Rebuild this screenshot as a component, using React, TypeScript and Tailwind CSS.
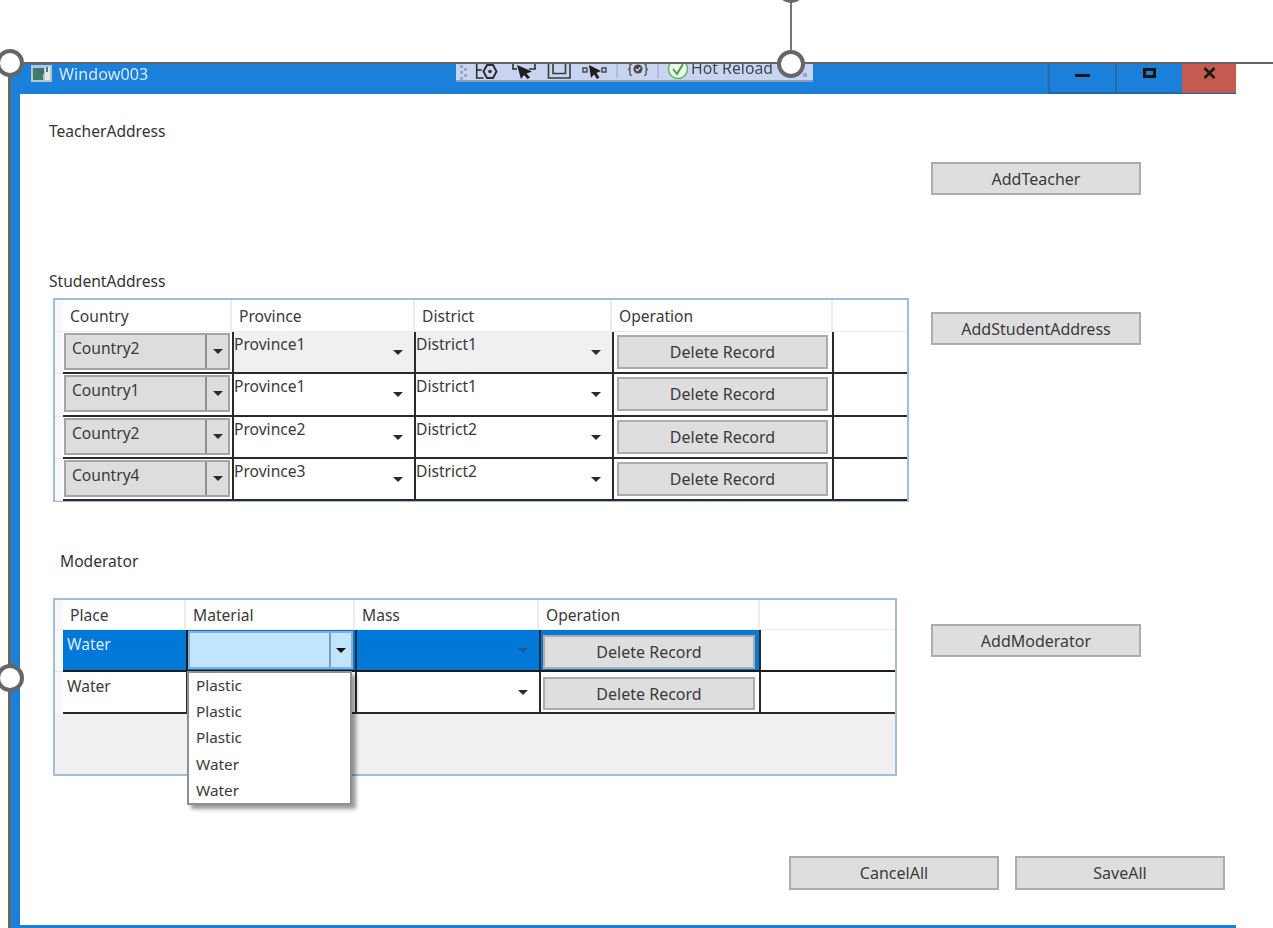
import React from "react";

const studentRows = [
  ["Country2", "Province1", "District1"],
  ["Country1", "Province1", "District1"],
  ["Country2", "Province2", "District2"],
  ["Country4", "Province3", "District2"]
];

function Caret({ color = "#2b2b2b" }: { color?: string }) {
  return (
    <svg width="10" height="5" viewBox="0 0 10 5" className="shrink-0">
      <path d="M0 0h10L5 5z" fill={color} />
    </svg>
  );
}

function GrayButton({ label, className }: { label: string; className: string }) {
  return (
    <button className={`flex items-center justify-center bg-[#dedede] border-2 border-[#acacac] text-[#3a3a3a] text-[16px] ${className}`}>
      {label}
    </button>
  );
}

function HeaderCell({ label, className }: { label: string; className: string }) {
  return (
    <div className={`h-full pl-[7px] pt-[2px] flex items-center bg-white border-r-2 border-[#ececec] text-[#3a3a3a] text-[15.6px] ${className}`}>
      {label}
    </div>
  );
}

function PickerCell({ text, className, bg = "bg-white", caret }: { text?: string; className: string; bg?: string; caret?: string }) {
  return (
    <div className={`h-full border-l-2 border-[#2a2a2a] pr-[11px] relative flex ${bg} ${className}`}>
      <span className="pt-[2px] leading-[20px] text-[15.6px] text-[#3a3a3a]">{text}</span>
      <span className="ml-auto mt-[18px] leading-none">
        <Caret color={caret} />
      </span>
    </div>
  );
}

function CountryCombo({ text }: { text: string }) {
  return (
    <div className="w-[166px] h-[37px] ml-[1px] mt-[1px] flex bg-[#dddddd] border-2 border-[#a4a4a4] text-[15.6px] text-[#3a3a3a]">
      <span className="flex-1 pl-[6px] pt-[3px] leading-[20px]">{text}</span>
      <span className="w-[23px] border-l-2 border-[#8e8e8e] flex items-center justify-center">
        <Caret />
      </span>
    </div>
  );
}

function StudentGrid() {
  return (
    <div className="ml-[33px] mt-[7px] w-[856px] border-2 border-b border-[#a3bcd8] bg-white">
      <div className="flex h-[32px] border-b border-[#ececec]">
        <div className="w-[8px] bg-[#f7f7f7]" />
        <HeaderCell label="Country" className="w-[169px]" />
        <HeaderCell label="Province" className="w-[183px]" />
        <HeaderCell label="District" className="w-[197px]" />
        <HeaderCell label="Operation" className="w-[221px]" />
        <div className="flex-1 bg-white" />
      </div>
      {studentRows.map((row, i) => (
        <div key={i} className="flex h-[42.3px]">
          <div className="w-[8px] bg-[#f7f7f7] border-b border-[#e4e4e4]" />
          <div className="flex flex-1 border-b-2 border-[#2a2a2a]">
            <div className="w-[169px]">
              <CountryCombo text={row[0]} />
            </div>
            <PickerCell text={row[1]} className="w-[182px]" bg={i === 0 ? "bg-[#f0f0f0]" : "bg-white"} />
            <PickerCell text={row[2]} className="w-[198px]" bg={i === 0 ? "bg-[#f0f0f0]" : "bg-white"} />
            <div className="w-[222px] h-full border-x-2 border-[#2a2a2a] pl-[3px] pt-[3px]">
              <GrayButton label="Delete Record" className="w-[211px] h-[34px]" />
            </div>
          </div>
        </div>
      ))}
    </div>
  );
}

function ModeratorGrid() {
  return (
    <div className="relative ml-[33px] mt-[27px] w-[844px] h-[178px] border-2 border-[#a3bcd8] bg-[#f0f0f0]">
      <div className="flex h-[30px] border-b border-[#ececec] bg-white">
        <div className="w-[8px] bg-[#f7f7f7]" />
        <HeaderCell label="Place" className="w-[123px]" />
        <HeaderCell label="Material" className="w-[169px]" />
        <HeaderCell label="Mass" className="w-[184px]" />
        <HeaderCell label="Operation" className="w-[221px]" />
      </div>

      <div className="flex h-[42px] bg-white">
        <div className="w-[8px] bg-[#f7f7f7] border-b border-[#e4e4e4]" />
        <div className="flex flex-1 border-b-2 border-[#1c1c1c]">
          <div className="w-[123px] bg-[#0078d7] pl-[4px] pt-[4px] leading-[20px] text-[15.6px] text-[#dcecfa]">Water</div>
          <div className="w-[169px] h-full border-l-2 border-[#1c1c1c] bg-[#0078d7]">
            <div className="flex w-[165px] h-[38px] mt-[1px] bg-[#c0e5fc] border-2 border-[#7fb2d6]">
              <span className="flex-1" />
              <span className="w-[22px] border-l-2 border-[#7d9eb5] flex items-center justify-center">
                <Caret color="#111111" />
              </span>
            </div>
          </div>
          <PickerCell className="w-[184px]" bg="bg-[#0078d7]" caret="#1c5d97" />
          <div className="w-[222px] h-full border-x-2 border-[#2a2a2a] bg-[#0078d7] pl-[2px] pt-[5px]">
            <GrayButton label="Delete Record" className="w-[212px] h-[34px]" />
          </div>
        </div>
      </div>

      <div className="flex h-[42px] bg-white">
        <div className="w-[8px] bg-[#f7f7f7]" />
        <div className="flex flex-1 border-b-2 border-[#2a2a2a]">
          <div className="w-[123px] pl-[4px] pt-[4px] leading-[20px] text-[15.6px] text-[#3a3a3a]">Water</div>
          <div className="w-[169px] h-full border-l-2 border-[#2a2a2a]" />
          <PickerCell className="w-[184px]" />
          <div className="w-[222px] h-full border-x-2 border-[#2a2a2a] pl-[2px] pt-[5px]">
            <GrayButton label="Delete Record" className="w-[212px] h-[33px]" />
          </div>
        </div>
      </div>

      <div className="absolute left-[132px] top-[71px] w-[165px] h-[134px] bg-white border-2 border-[#8f8f8f] shadow-[4px_4px_4px_rgba(0,0,0,0.4)]">
        {["Plastic", "Plastic", "Plastic", "Water", "Water"].map((item, i) => (
          <div key={i} className="h-[26.3px] pl-[7px] pb-[2px] flex items-center text-[15.3px] text-[#3a3a3a]">
            {item}
          </div>
        ))}
      </div>
    </div>
  );
}

function WindowIcon() {
  return (
    <svg width="21" height="17" viewBox="0 0 21 17" className="mt-[1px] shrink-0">
      <rect width="21" height="17" fill="#b9c6cf" />
      <rect x="2" y="3" width="10" height="12" fill="#3d7f6c" />
      <rect x="7" y="3" width="6" height="6" fill="#4b6a7c" />
      <rect x="14" y="2" width="5" height="13" fill="#e4e9e6" />
      <rect x="15" y="2" width="2" height="5" fill="#5d7480" />
    </svg>
  );
}

function Toolbar() {
  return (
    <div className="w-[357px] h-[18px] flex overflow-hidden bg-[#c9d5f0] border-b-2 border-[#8c9bbf] relative">
      <svg width="357" height="18" viewBox="0 0 357 18" className="shrink-0">
        <g fill="#9aa8c8">
          <rect x="4" y="1" width="3" height="3" />
          <rect x="8" y="4" width="3" height="3" />
          <rect x="4" y="7" width="3" height="3" />
          <rect x="8" y="10" width="3" height="3" />
          <rect x="4" y="13" width="3" height="3" />
        </g>
        <g fill="none" stroke="#2e2e2e" strokeWidth="1.6">
          <path d="M20.7 0v14h7" />
          <path d="M20.7 6h5" />
          <path d="M31 1h6l3.5 6.5-3.5 6.5h-6l-3.500-6.500z" strokeWidth="2" />
        </g>
        <circle cx="34" cy="7.500" r="1.800" fill="#2e2e2e" />
        <path d="M57 0v5h4M79 0v5h-6" fill="none" stroke="#2e2e2e" strokeWidth="1.600" />
        <path d="M61 1l15 6.500-5.500 2 3.500 4-2.500 1.500-3.500-4-3 4z" fill="#1f1f1f" />
        <path d="M92.500 0v14h21.500V0M97 0v9.500h12.500V0" fill="none" stroke="#3a3a3a" strokeWidth="1.600" />
        <path d="M127 4h4v4h-4zM146 4h4v4h-4z" fill="none" stroke="#4a4a4a" strokeWidth="1.400" />
        <path d="M133 1l12 6-4.500 2 3 4.500-2.500 1.500-3-4.500-3 3.500z" fill="#1f1f1f" />
        <path d="M161 0v14" stroke="#a8b2c8" strokeWidth="1.400" />
        <path d="M176 0c-3 0-2 2-2 3.500s-1 2-2 2c1 0 2 .5 2 2s-1 4 2 4M188 0c3 0 2 2 2 3.500s1 2 2 2c-1 0-2 .5-2 2s1 4-2 4" fill="none" stroke="#555" strokeWidth="1.400" />
        <circle cx="182" cy="5" r="4.500" fill="#4a4a4a" />
        <path d="M179.800 5l1.700 1.700 2.800-3.400" fill="none" stroke="#e2e6f0" strokeWidth="1.200" />
        <path d="M202 0v14" stroke="#a8b2c8" strokeWidth="1.400" />
        <circle cx="222" cy="5" r="9.500" fill="#f2f6f0" stroke="#5cb85c" strokeWidth="1.500" />
        <path d="M217 5l4 5 6-10" fill="none" stroke="#3fa63f" strokeWidth="2" />
        <rect x="347" y="9" width="4" height="4" fill="#9aa8c8" />
      </svg>
      <span className="absolute left-[235px] top-[-6px] leading-[20px] text-[15.8px] text-[#3f4654] whitespace-nowrap">Hot Reload</span>
    </div>
  );
}

function WindowButtons() {
  return (
    <div className="ml-auto flex h-[29px] shadow-[0_1px_1px_rgba(0,0,0,0.2)]">
      <div className="w-[67px] border-l-2 border-[#2a69a3] border-b border-b-[#2a69a3] flex justify-center pt-[10px]">
        <span className="w-[15px] h-[3px] bg-[#141414]" />
      </div>
      <div className="w-[67px] border-l-2 border-[#2a69a3] border-b border-b-[#2a69a3] flex justify-center pt-[4px]">
        <span className="w-[13px] h-[10px] border-[3px] border-[#141414]" />
      </div>
      <div className="w-[54px] bg-[#c55a4e] flex justify-center pt-[3px]">
        <svg width="13" height="12" viewBox="0 0 13 12">
          <path d="M1.5 1l10 10M11.5 1l-10 10" stroke="#1a1a1a" strokeWidth="2.6" />
        </svg>
      </div>
    </div>
  );
}

function Handle({ className }: { className: string }) {
  return <div className={`absolute w-[28px] h-[28px] rounded-full bg-white border-[4px] border-[#666666] ${className}`} />;
}

export default function App() {
  return (
    <div className="relative w-[1273px] h-[928px] overflow-hidden bg-white pt-[64px] pl-[11px] font-['Noto_Sans',sans-serif]">
      <div className="w-[1225px] h-[864px] flex flex-col bg-[#1a80d9] blur-[0.5px]">
        <div className="flex h-[30px] shrink-0">
          <div className="w-[445px] flex pl-[20px]">
            <WindowIcon />
            <span className="ml-[7px] leading-[20px] text-[16.2px] text-[#d8e9f9]">Window003</span>
          </div>
          <Toolbar />
          <WindowButtons />
        </div>

        <div className="ml-[9px] mb-[3px] flex-1 bg-white">
          <section className="flex h-[176px]">
            <div className="w-[911px] pl-[29px] pt-[27px] leading-[20px] text-[15.6px] text-[#333333]">TeacherAddress</div>
            <GrayButton label="AddTeacher" className="w-[210px] h-[33px] mt-[68px]" />
          </section>

          <section className="flex h-[281px]">
            <div className="w-[911px]">
              <div className="ml-[29px] mt-[1px] leading-[20px] text-[15.6px] text-[#333333]">StudentAddress</div>
              <StudentGrid />
            </div>
            <GrayButton label="AddStudentAddress" className="w-[210px] h-[33px] mt-[42px]" />
          </section>

          <section className="flex h-[305px]">
            <div className="w-[911px]">
              <div className="ml-[40px] leading-[20px] text-[15.6px] text-[#333333]">Moderator</div>
              <ModeratorGrid />
            </div>
            <GrayButton label="AddModerator" className="w-[210px] h-[33px] mt-[73px]" />
          </section>

          <footer className="flex justify-end gap-[16px] pr-[11px]">
            <GrayButton label="CancelAll" className="w-[210px] h-[34px]" />
            <GrayButton label="SaveAll" className="w-[210px] h-[34px]" />
          </footer>
        </div>
      </div>

      <div className="absolute left-[8px] top-[62px] w-[1265px] h-[2px] bg-[#666666]" />
      <div className="absolute left-[8px] top-[62px] w-[3px] h-[866px] bg-[#666666]" />
      <div className="absolute left-[790px] top-0 w-[2px] h-[62px] bg-[#777777]" />
      <Handle className="-left-[4px] top-[49px]" />
      <Handle className="left-[777px] top-[50px]" />
      <Handle className="-left-[4px] top-[664px]" />
      <Handle className="left-[777px] -top-[25px]" />
    </div>
  );
}
